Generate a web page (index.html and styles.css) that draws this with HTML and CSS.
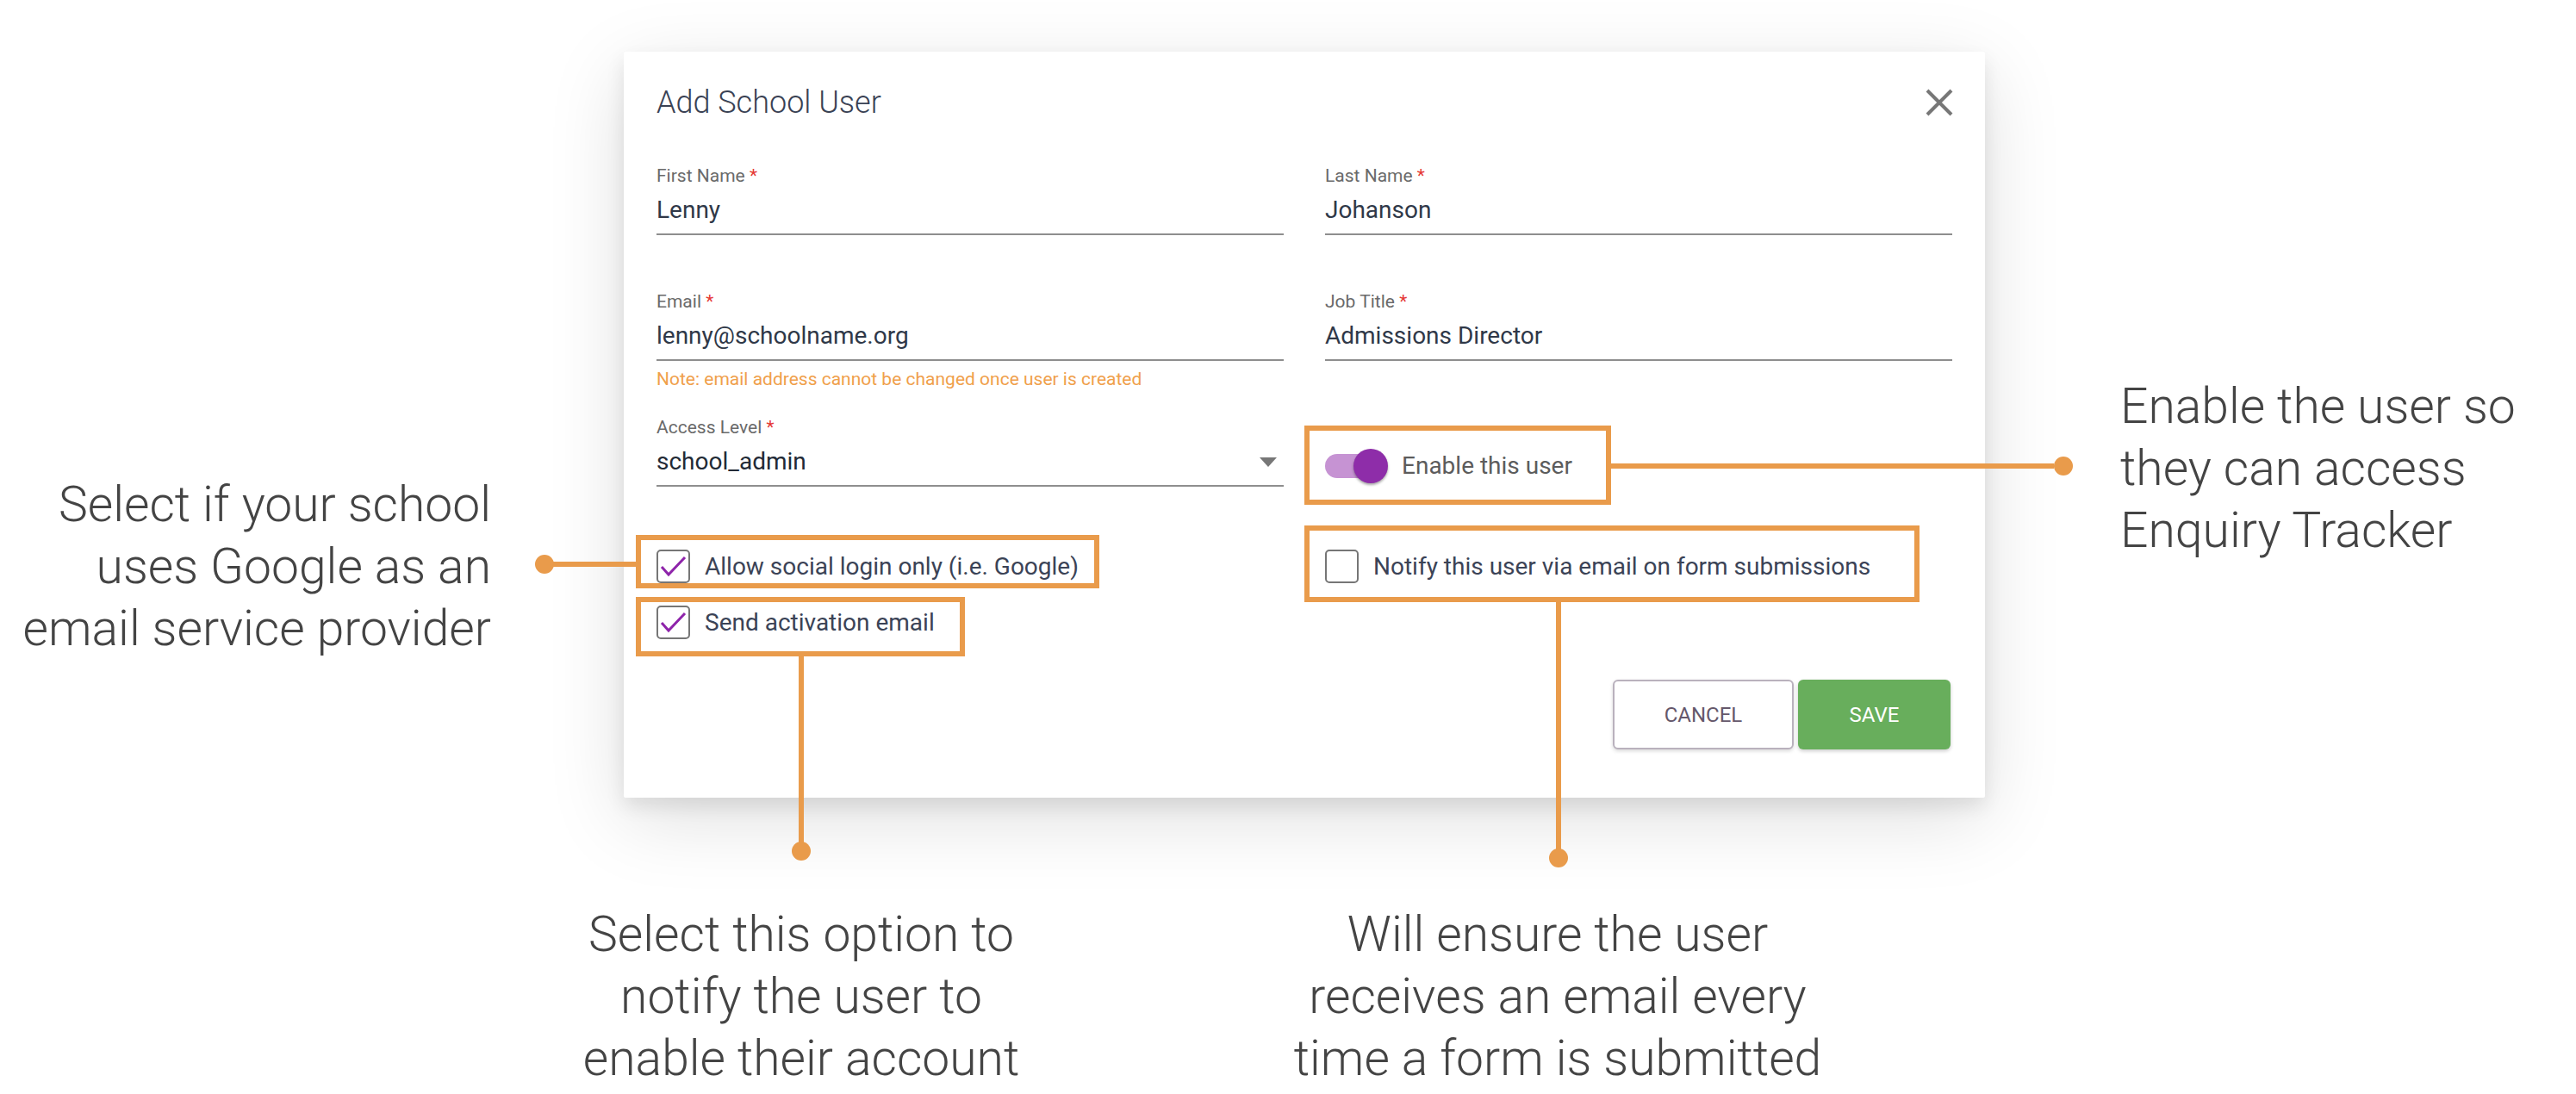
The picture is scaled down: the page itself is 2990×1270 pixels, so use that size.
FILE: index.html
```html
<!DOCTYPE html>
<html lang="en">
<head>
<meta charset="utf-8">
<title>Add School User</title>
<link rel="stylesheet" href="styles.css">
</head>
<body>
<div class="page">
  <div class="dialog">
    <div class="dialog-header">
      <h1 class="dialog-title">Add School User</h1>
      <svg class="close-btn" viewBox="0 0 32 32" aria-label="Close"><path d="M2 2 L30 30 M30 2 L2 30" stroke="#777" stroke-width="4" fill="none"/></svg>
    </div>

    <div class="form">
      <div class="field">
        <div class="field-label">First Name <span class="req">*</span></div>
        <div class="field-value">Lenny</div>
      </div>
      <div class="field">
        <div class="field-label">Last Name <span class="req">*</span></div>
        <div class="field-value">Johanson</div>
      </div>

      <div class="field">
        <div class="field-label">Email <span class="req">*</span></div>
        <div class="field-value">lenny@schoolname.org</div>
        <div class="field-note">Note: email address cannot be changed once user is created</div>
      </div>
      <div class="field">
        <div class="field-label">Job Title <span class="req">*</span></div>
        <div class="field-value">Admissions Director</div>
      </div>

      <div class="field">
        <div class="field-label">Access Level <span class="req">*</span></div>
        <div class="field-value select">school_admin<span class="caret"></span></div>
      </div>
      <div class="hl hl-enable">
        <span class="switch"><span class="switch-track"></span><span class="switch-thumb"></span></span>
        <span class="opt-label muted">Enable this user</span>
        <span class="conn-h conn-enable"></span>
        <span class="dot dot-enable"></span>
        <div class="callout callout-enable">Enable the user so<br>they can access<br>Enquiry Tracker</div>
      </div>

      <div class="checks">
        <div class="hl hl-social">
          <span class="checkbox"><svg viewBox="0 0 35 35"><path d="M4 18 L12 27 L31 7" stroke="#8e24aa" stroke-width="3" fill="none"/></svg></span>
          <span class="opt-label">Allow social login only (i.e. Google)</span>
          <span class="conn-h conn-social"></span>
          <span class="dot dot-social"></span>
          <div class="callout callout-social">Select if your school<br>uses Google as an<br>email service provider</div>
        </div>
        <div class="hl hl-activation">
          <span class="checkbox"><svg viewBox="0 0 35 35"><path d="M4 18 L12 27 L31 7" stroke="#8e24aa" stroke-width="3" fill="none"/></svg></span>
          <span class="opt-label">Send activation email</span>
          <span class="conn-v conn-activation"></span>
          <span class="dot dot-activation"></span>
          <div class="callout callout-center callout-activation">Select this option to<br>notify the user to<br>enable their account</div>
        </div>
      </div>
      <div class="hl hl-notify">
        <span class="checkbox"></span>
        <span class="opt-label">Notify this user via email on form submissions</span>
        <span class="conn-v conn-notify"></span>
        <span class="dot dot-notify"></span>
        <div class="callout callout-center callout-notify">Will ensure the user<br>receives an email every<br>time a form is submitted</div>
      </div>
    </div>

    <div class="actions">
      <button class="btn btn-cancel">Cancel</button>
      <button class="btn btn-save">Save</button>
    </div>
  </div>
</div>
</body>
</html>
```

FILE: styles.css
```css
* { box-sizing: border-box; }
html, body { margin: 0; padding: 0; }
body {
  width: 2990px;
  height: 1270px;
  overflow: hidden;
  background: #ffffff;
  font-family: Roboto, "Noto Sans", "Liberation Sans", sans-serif;
}
.page { padding: 60px 0 0 724px; }

.dialog {
  width: 1580px;
  height: 866px;
  background: #fff;
  border-radius: 2px;
  padding: 37px 38px 56px;
  box-shadow: 0 10px 22px rgba(0,0,0,0.09), 0 24px 90px rgba(0,0,0,0.13);
}
.dialog-header {
  display: flex;
  justify-content: space-between;
  align-items: center;
  height: 44px;
}
.dialog-title {
  margin: 0;
  font-weight: 300;
  font-size: 36px;
  line-height: 44px;
  color: #3a4254;
}
.close-btn { width: 32px; height: 32px; display: block; margin-right: -1px; }

.form {
  display: grid;
  grid-template-columns: 728px 728px;
  grid-template-rows: 146px 146px auto auto;
  column-gap: 48px;
  margin-top: 51px;
}
.field-label {
  font-size: 21px;
  line-height: 25px;
  color: #6a6a6a;
}
.req { color: #e53935; }
.field-value {
  margin-top: 9px;
  font-size: 28px;
  line-height: 36px;
  padding-bottom: 9px;
  border-bottom: 2px solid #8e8e8e;
  color: #2f3848;
  display: flex;
  justify-content: space-between;
  align-items: center;
}
.select { color: #222a36; }
.caret {
  width: 0; height: 0;
  border-left: 10px solid transparent;
  border-right: 10px solid transparent;
  border-top: 11px solid #777;
  margin-right: 8px;
}
.field-note {
  margin-top: 9px;
  font-size: 21px;
  line-height: 24px;
  color: #f0a04b;
}

/* highlighted options */
.hl {
  position: relative;
  display: flex;
  align-items: center;
  align-self: start;
  gap: 17px;
  margin-left: -24px;
  padding-left: 18px;
  border: 6px solid #e99b4b;
}
.hl-enable { width: 356px; height: 92px; padding-top: 21px; padding-bottom: 19px; margin-top: 10px; gap: 16px; }
.hl-notify { width: 714px; height: 89px; padding-top: 22px; padding-bottom: 16px; margin-top: 24px; }
.checks {
  display: flex;
  flex-direction: column;
  align-items: flex-start;
  gap: 10px;
  margin-top: 35px;
}
.hl-social { width: 538px; height: 62px; padding-top: 11px; padding-bottom: 0; }
.hl-activation { width: 382px; height: 69px; padding-top: 4px; padding-bottom: 14px; }

.opt-label {
  font-size: 28px;
  line-height: 36px;
  color: #3b4356;
  white-space: nowrap;
}
.opt-label.muted { color: #5c5c5c; }

.checkbox {
  flex: none;
  width: 39px;
  height: 39px;
  border: 2px solid #767676;
  border-radius: 5px;
  display: flex;
}
.checkbox svg { width: 35px; height: 35px; }

.switch { position: relative; flex: none; width: 73px; height: 40px; }
.switch-track {
  position: absolute; left: 0; top: 6px;
  width: 67px; height: 28px; border-radius: 14px;
  background: #c693d3;
}
.switch-thumb {
  position: absolute; left: 33px; top: 0;
  width: 40px; height: 40px; border-radius: 50%;
  background: #8e2da9;
  box-shadow: 0 2px 3px rgba(0,0,0,0.35);
}

/* callouts */
.conn-h, .conn-v, .dot { position: absolute; background: #e99b4b; }
.dot { width: 22px; height: 22px; border-radius: 50%; }
.conn-h { height: 6px; }
.conn-v { width: 6px; }

.callout {
  position: absolute;
  font-family: Roboto, "Noto Sans", sans-serif;
  font-weight: 300;
  font-size: 57px;
  line-height: 72px;
  color: #444;
  white-space: nowrap;
}
.callout-center { text-align: center; transform: translateX(-50%); }

.conn-social { left: -112px; top: 25px; width: 106px; }
.dot-social { left: -123px; top: 17px; }
.callout-social { right: calc(100% + 174px); top: -77px; text-align: right; }

.conn-enable { left: calc(100% + 6px); top: 38px; width: 514px; }
.dot-enable { left: 864px; top: 30px; }
.callout-enable { left: 941px; top: -64px; }

.conn-activation { left: 183px; top: 63px; height: 226px; }
.dot-activation { left: 175px; top: 278px; }
.callout-activation { left: 186px; top: 350px; }

.conn-notify { left: 286px; top: 83px; height: 297px; }
.dot-notify { left: 278px; top: 369px; }
.callout-notify { left: 288px; top: 433px; }

/* actions */
.actions {
  display: flex;
  justify-content: flex-end;
  gap: 5px;
  margin-top: 27px;
  padding-right: 2px;
}
.btn {
  height: 81px;
  font-family: Roboto, "Noto Sans", sans-serif;
  font-size: 24px;
  text-transform: uppercase;
  border-radius: 6px;
  display: flex;
  align-items: center;
  justify-content: center;
}
.btn-cancel {
  width: 210px;
  background: #fff;
  border: 2px solid #b9b1bd;
  color: #65586b;
  box-shadow: 0 2px 4px rgba(0,0,0,0.15);
}
.btn-save {
  width: 177px;
  background: #68ae5c;
  border: none;
  color: #fff;
  box-shadow: 0 2px 4px rgba(0,0,0,0.2);
}
```
